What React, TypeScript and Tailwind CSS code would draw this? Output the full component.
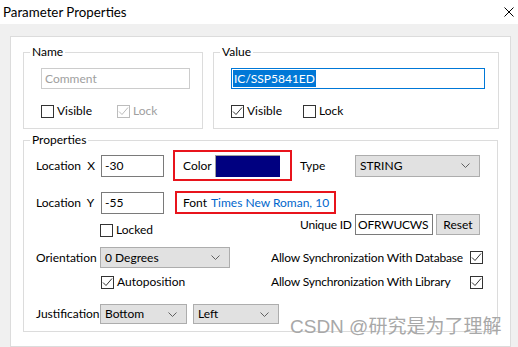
import React from "react";

const FONT = { fontFamily: "Lato, 'Noto Sans', sans-serif" };

function Check({ checked = false, disabled = false }: { checked?: boolean; disabled?: boolean }) {
  return (
    <span
      className={`w-[13px] h-[13px] border ${disabled ? "border-[#bcbcbc]" : "border-[#333333]"} bg-white flex items-center justify-center shrink-0`}
    >
      {checked && (
        <svg width="11" height="11" viewBox="0 0 11 11">
          <polyline
            points="1,5.5 4,8.5 10,1.5"
            fill="none"
            stroke={disabled ? "#bcbcbc" : "#333333"}
            strokeWidth="1"
          />
        </svg>
      )}
    </span>
  );
}

function Chevron() {
  return (
    <svg width="9" height="5" viewBox="0 0 9 5" className="shrink-0">
      <polyline points="0.5,0.5 4.5,4.5 8.5,0.5" fill="none" stroke="#606060" strokeWidth="1" />
    </svg>
  );
}

function Select({ value, className }: { value: string; className: string }) {
  return (
    <div
      className={`${className} bg-[#e1e1e1] border border-[#adadad] flex items-center justify-between pl-[4px] pr-[9px] shrink-0`}
    >
      <span>{value}</span>
      <Chevron />
    </div>
  );
}

function Group({ label, className, children }: { label: string; className: string; children?: React.ReactNode }) {
  return (
    <div className={`${className} relative border border-[#dcdcdc] shrink-0`}>
      <span className="absolute left-[6px] -top-[9px] bg-white px-[2px] leading-[16px]">{label}</span>
      {children}
    </div>
  );
}

export default function App() {
  return (
    <div className="w-[518px] h-[347px] bg-[#f0f0f0] relative overflow-hidden text-[12px] text-black" style={FONT}>
      {/* title bar */}
      <div className="h-[24px] bg-white flex items-center justify-between pl-[3px] pr-[4px]">
        <span className="text-[13.3px] leading-[20px]">Parameter Properties</span>
        <svg width="10" height="10" viewBox="0 0 10 10">
          <line x1="0.5" y1="0.5" x2="9.5" y2="9.5" stroke="#000" strokeWidth="1" />
          <line x1="9.5" y1="0.5" x2="0.5" y2="9.5" stroke="#000" strokeWidth="1" />
        </svg>
      </div>

      {/* body */}
      <div className="pt-[12px] pl-[10px]">
        <div className="w-[501px] h-[311px] bg-white border border-[#dcdcdc] pt-[15px] pl-[12px]">
          <div className="flex gap-[10px]">
            <Group label="Name" className="w-[180px] h-[77px] pt-[15px] pl-[17px]">
              <div className="w-[149px] h-[21px] border border-[#cccccc] flex items-center pl-[3px] text-[#a0a0a0]">
                Comment
              </div>
              <div className="flex items-center mt-[13px]">
                <div className="w-[76px] flex items-center gap-[3px]">
                  <Check />
                  <span>Visible</span>
                </div>
                <div className="flex items-center gap-[3px] text-[#a0a0a0]">
                  <Check checked disabled />
                  <span>Lock</span>
                </div>
              </div>
            </Group>
            <Group label="Value" className="w-[286px] h-[77px] pt-[15px] pl-[17px]">
              <div className="w-[254px] h-[21px] border border-[#0078d7] flex items-center pl-[1px]">
                <span className="bg-[#0078d7] text-white leading-[17px] px-[1px]">IC/SSP5841ED</span>
              </div>
              <div className="flex items-center mt-[13px]">
                <div className="w-[72px] flex items-center gap-[3px]">
                  <Check checked />
                  <span>Visible</span>
                </div>
                <div className="flex items-center gap-[3px]">
                  <Check />
                  <span>Lock</span>
                </div>
              </div>
            </Group>
          </div>

          <Group label="Properties" className="w-[475px] h-[192px] mt-[11px] pt-[9px] pl-[12px]">
            {/* Row A */}
            <div className="h-[31px] flex items-center">
              <span className="w-[65px] whitespace-pre">{"Location  X"}</span>
              <div className="w-[63px] h-[22px] border border-[#7a7a7a] flex items-center pl-[3px]">-30</div>
              <div className="ml-[9px] w-[119px] h-[31px] border-2 border-[#e8141c] flex items-center pl-[8px]">
                <span className="w-[32px]">Color</span>
                <div className="w-[65px] h-[22px] bg-[#000080] border-l border-t border-[#a0a0a0]" />
              </div>
              <span className="ml-[8px] w-[55px]">Type</span>
              <Select value="STRING" className="w-[125px] h-[22px]" />
            </div>
            {/* Row B */}
            <div className="h-[23px] mt-[10px] flex items-center">
              <span className="w-[65px] whitespace-pre">{"Location  Y"}</span>
              <div className="w-[63px] h-[22px] border border-[#7a7a7a] flex items-center pl-[3px]">-55</div>
              <div className="ml-[11px] w-[161px] h-[23px] border-2 border-[#e8141c] flex items-center pl-[6px]">
                <span className="w-[28px]">Font</span>
                <span className="text-[#0066cc]">Times New Roman, 10</span>
              </div>
            </div>
            {/* Row C */}
            <div className="h-[21px] flex items-start">
              <div className="w-[264px] flex items-center mt-[7px]">
                <span className="w-[64px]" />
                <Check />
                <span className="ml-[3px]">Locked</span>
              </div>
              <div className="flex items-center h-[21px]">
                <span className="w-[55px] tracking-[-0.2px]">Unique ID</span>
                <div className="w-[78px] h-[21px] border border-[#7a7a7a] flex items-center pl-[2px] tracking-[-0.2px]">OFRWUCWS</div>
                <div className="ml-[3px] w-[44px] h-[21px] bg-[#e1e1e1] border border-[#adadad] flex items-center justify-center">
                  Reset
                </div>
              </div>
            </div>
            {/* Row D */}
            <div className="h-[21px] mt-[12px] flex items-center">
              <div className="w-[235px] flex items-center">
                <span className="w-[64px]">Orientation</span>
                <Select value="0 Degrees" className="w-[130px] h-[21px]" />
              </div>
              <span className="w-[199px] tracking-[-0.18px]">Allow Synchronization With Database</span>
              <Check checked />
            </div>
            {/* Row E */}
            <div className="h-[14px] mt-[7px] flex items-center">
              <div className="w-[235px] flex items-center">
                <span className="w-[65px]" />
                <Check checked />
                <span className="ml-[3px]">Autoposition</span>
              </div>
              <span className="w-[199px] tracking-[-0.18px]">Allow Synchronization With Library</span>
              <Check checked />
            </div>
            {/* Row F */}
            <div className="h-[20px] mt-[15px] flex items-center">
              <span className="w-[64px]">Justification</span>
              <Select value="Bottom" className="w-[87px] h-[20px]" />
              <Select value="Left" className="ml-[6px] w-[86px] h-[20px]" />
            </div>
          </Group>
        </div>
      </div>

      {/* watermark */}
      <div
        className="absolute left-[290px] top-[314px] text-[19px] leading-[26px] text-[#a8a8a8] whitespace-nowrap"
        style={{ fontFamily: "'Liberation Sans', 'Noto Sans CJK SC', sans-serif" }}
      >
        CSDN @研究是为了理解
      </div>
    </div>
  );
}
